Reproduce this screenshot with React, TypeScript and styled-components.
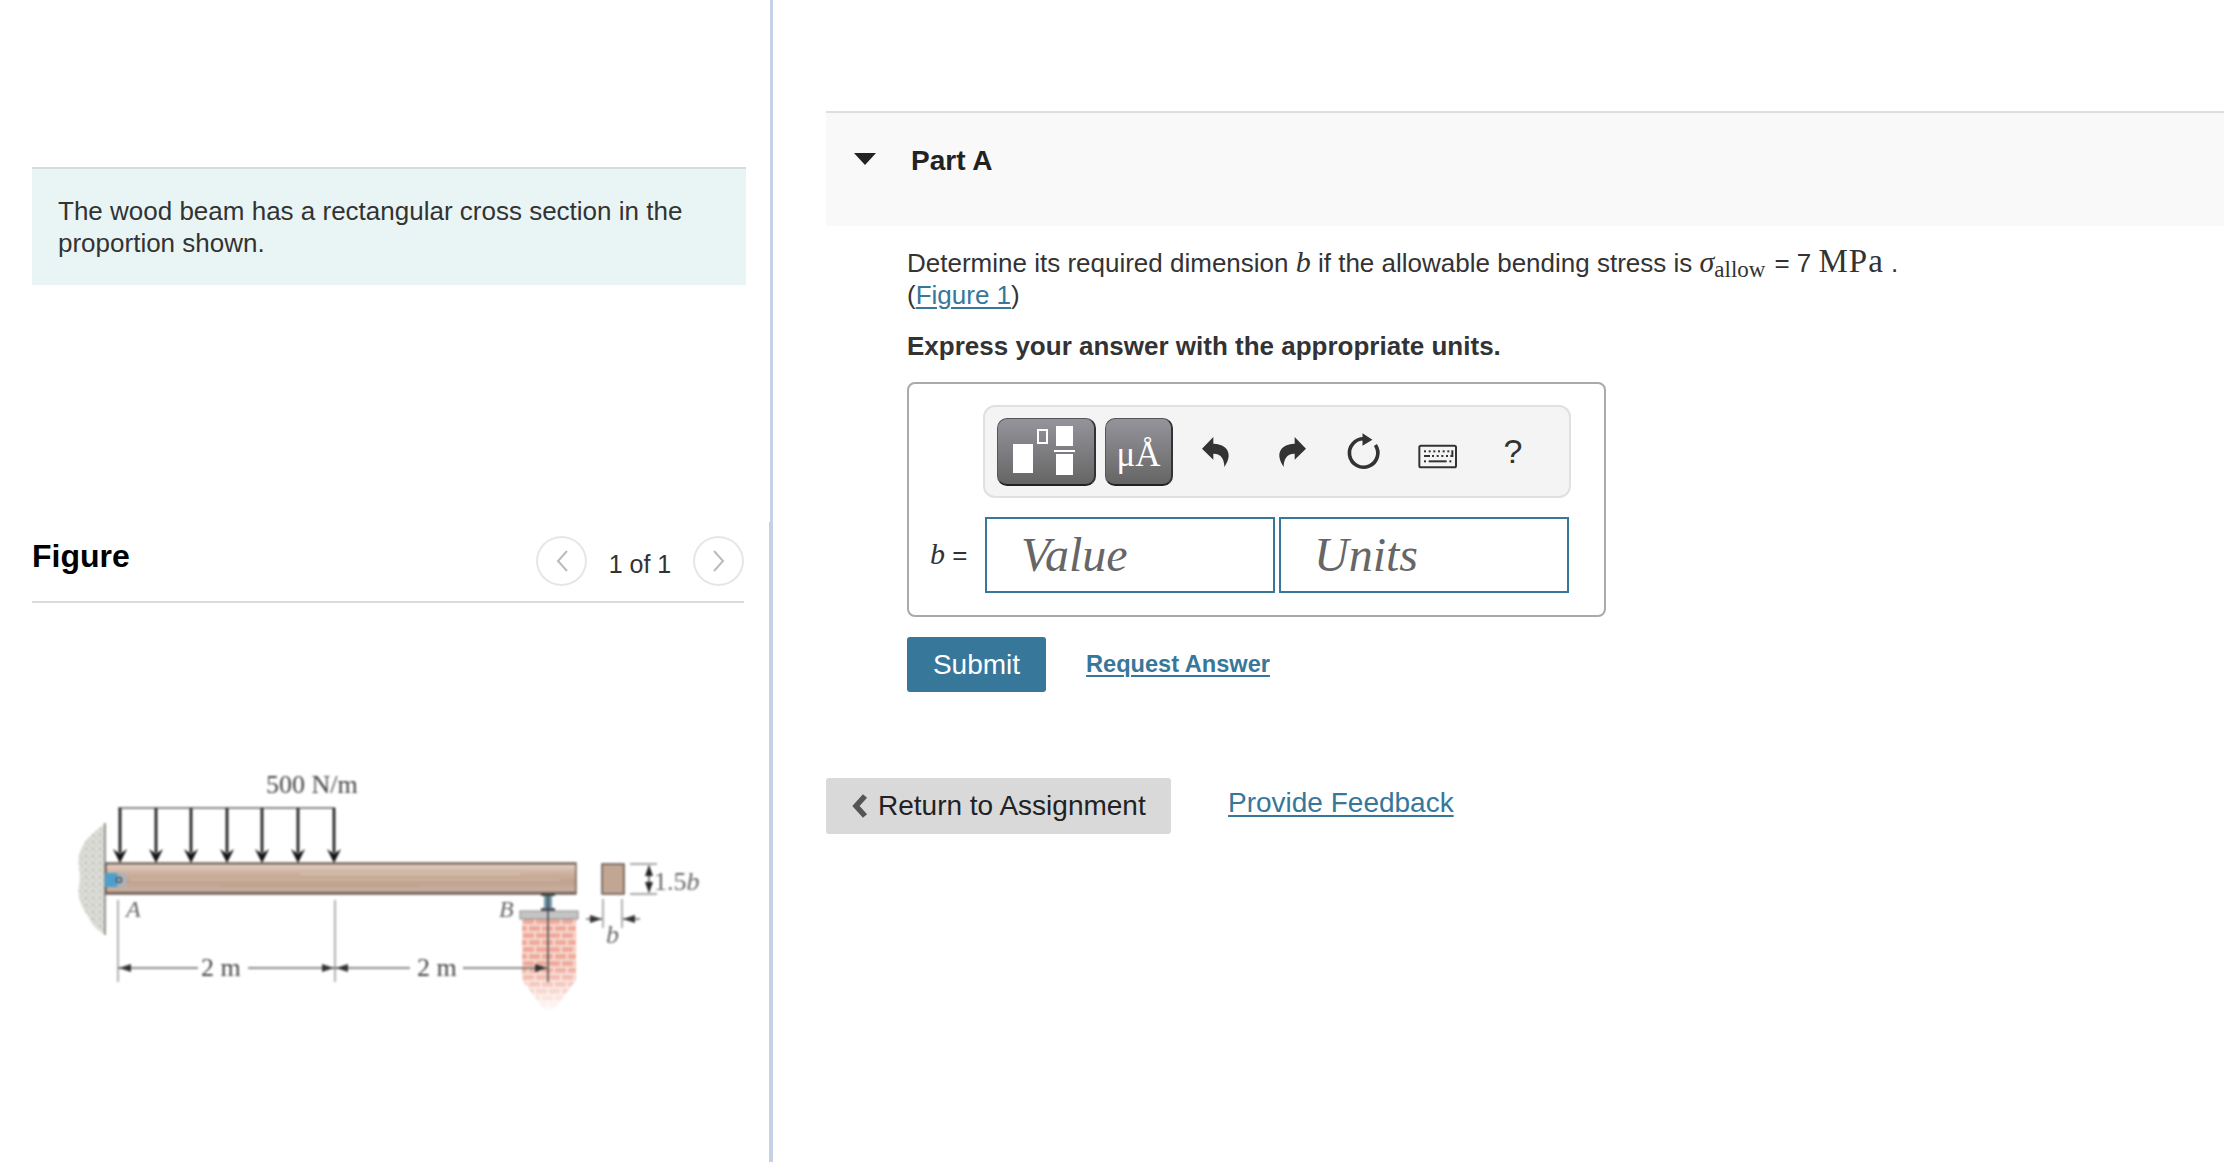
import React from "react";
import styled, { createGlobalStyle } from "styled-components";

const Global = createGlobalStyle`
  html, body { margin: 0; padding: 0; background: #fff; }
  body { font-family: "Liberation Sans", Arial, sans-serif; color: #333; }
`;

const Page = styled.div`
  display: flex;
  width: 2224px;
  height: 1162px;
  overflow: hidden;
`;

const LeftPane = styled.aside`
  position: relative;
  box-sizing: border-box;
  width: 773px;
  height: 100%;
  flex: none;
  padding: 167px 0 0 32px;
  border-right: 3px solid #c6d2e4;
  &::after {
    content: "";
    position: absolute;
    top: 522px;
    bottom: 0;
    right: 0;
    width: 1px;
    background: #c6d2e4;
  }
`;

const Intro = styled.div`
  box-sizing: border-box;
  width: 714px;
  height: 118px;
  padding: 26px 26px 0;
  background: #e9f5f5;
  border-top: 2px solid #d4dcdc;
  font-size: 26px;
  line-height: 32px;
  color: #333;
`;

const FigureHeader = styled.div`
  box-sizing: border-box;
  display: flex;
  justify-content: space-between;
  width: 712px;
  height: 70px;
  margin-top: 248px;
  padding-top: 3px;
  border-bottom: 2px solid #dcdcdc;
`;

const FigureTitle = styled.h2`
  margin: 0;
  font-size: 32px;
  line-height: 40px;
  font-weight: 700;
  color: #000;
`;

const Pager = styled.div`
  display: flex;
  align-items: flex-start;
`;

const PagerCircle = styled.div`
  box-sizing: border-box;
  display: flex;
  align-items: center;
  justify-content: center;
  width: 51px;
  height: 50px;
  border: 2px solid #e6e6e6;
  border-radius: 50%;
`;

const PagerText = styled.span`
  width: 106px;
  text-align: center;
  font-size: 25px;
  line-height: 56px;
  color: #333;
`;

const FigureSvg = styled.svg`
  display: block;
  width: 660px;
  height: 260px;
  margin: 157px 0 0 28px;
  filter: blur(0.8px);
`;

const RightPane = styled.main`
  flex: 1;
  min-width: 0;
  padding: 111px 0 0 53px;
`;

const PartHeader = styled.div`
  box-sizing: border-box;
  display: flex;
  height: 115px;
  padding: 30px 0 0 28px;
  background: #f9f9f9;
  border-top: 2px solid #dedede;
`;

const Caret = styled.span`
  width: 0;
  height: 0;
  margin-top: 10px;
  border-left: 11px solid transparent;
  border-right: 11px solid transparent;
  border-top: 12px solid #222;
`;

const PartTitle = styled.h3`
  margin: 0 0 0 35px;
  font-size: 28px;
  line-height: 36px;
  font-weight: 700;
  color: #222;
`;

const PartBody = styled.div`
  padding: 21px 0 0 81px;
`;

const Para = styled.p`
  margin: 0;
  width: 1040px;
  font-size: 26px;
  line-height: 32px;
  color: #333;
`;

const Prompt = styled.p`
  margin: 19px 0 0;
  font-size: 26px;
  line-height: 33px;
  font-weight: 700;
  color: #333;
`;

const MathVar = styled.span`
  font-family: "Liberation Serif", serif;
  font-style: italic;
  font-size: ${p => p.$size || 30}px;
  line-height: 0;
`;

const MathSub = styled.span`
  font-family: "Liberation Serif", serif;
  font-size: 23px;
  line-height: 0;
  position: relative;
  top: 5px;
  margin-right: 9px;
`;

const MathUnit = styled.span`
  font-family: "Liberation Serif", serif;
  font-size: 33px;
  letter-spacing: 1px;
  line-height: 0;
`;

const Link = styled.a`
  color: #37779a;
  text-decoration: underline;
  text-decoration-thickness: 2px;
  text-underline-offset: 3px;
`;

const AnswerBox = styled.div`
  box-sizing: border-box;
  width: 699px;
  height: 235px;
  margin-top: 19px;
  padding: 21px 0 0;
  border: 2px solid #aaa;
  border-radius: 8px;
`;

const Toolbar = styled.div`
  box-sizing: border-box;
  display: flex;
  align-items: center;
  width: 588px;
  height: 93px;
  margin-left: 74px;
  padding-left: 12px;
  background: #f4f4f4;
  border: 2px solid #e0e0e0;
  border-radius: 12px;
`;

const ToolButton = styled.div`
  box-sizing: border-box;
  flex: none;
  display: flex;
  align-items: center;
  justify-content: center;
  width: ${p => p.$w}px;
  height: 68px;
  margin-right: ${p => p.$mr}px;
  background: linear-gradient(#96949b, #656565);
  border: 1px solid #55555a;
  border-bottom: 2px solid #222;
  border-right: 2px solid #333;
  border-radius: 10px;
`;

const UnitGlyph = styled.span`
  font-family: "Liberation Serif", serif;
  font-size: 35px;
  line-height: 1;
  color: #fff;
  margin-top: 6px;
`;

const ToolSlot = styled.div`
  flex: none;
  display: flex;
  align-items: center;
  justify-content: center;
  width: ${p => p.$w}px;
`;

const Help = styled.span`
  font-size: 34px;
  line-height: 40px;
  color: #333;
  margin: -2px 2px 0 0;
`;

const InputRow = styled.div`
  display: flex;
  align-items: center;
  margin-top: 19px;
`;

const InputLabel = styled.div`
  box-sizing: border-box;
  width: 76px;
  padding-left: 21px;
  font-size: 26px;
  white-space: nowrap;
`;

const Field = styled.div`
  box-sizing: border-box;
  width: 290px;
  height: 76px;
  margin-right: 4px;
  padding-left: ${p => p.$pl}px;
  border: 2px solid #37779a;
  font-family: "Liberation Serif", serif;
  font-style: italic;
  font-size: 48px;
  line-height: 72px;
  color: #666;
`;

const SubmitRow = styled.div`
  display: flex;
  align-items: center;
  margin-top: 20px;
`;

const SubmitButton = styled.button`
  width: 139px;
  height: 55px;
  padding: 0;
  border: 0;
  border-radius: 3px;
  background: #37779a;
  color: #fff;
  font-family: inherit;
  font-size: 28px;
`;

const RequestLink = styled(Link)`
  margin-left: 40px;
  font-size: 23.6px;
  font-weight: 700;
`;

const FooterRow = styled.div`
  display: flex;
  align-items: flex-start;
  margin: 86px 0 0 -81px;
`;

const ReturnButton = styled.button`
  box-sizing: border-box;
  display: flex;
  align-items: center;
  gap: 10px;
  width: 345px;
  height: 56px;
  padding: 0 0 0 26px;
  border: 0;
  border-radius: 3px;
  background: #d9d9d9;
  color: #222;
  font-family: inherit;
  font-size: 28px;
`;

const FeedbackLink = styled(Link)`
  margin: 6px 0 0 57px;
  font-size: 28px;
  line-height: 38px;
`;

const Arrow = ({ x, y1, y2 }: { x: number; y1: number; y2: number }) => (
  <g>
    <line x1={x} y1={y1} x2={x} y2={y2 - 10} stroke="#222" strokeWidth="2.8" />
    <path d={`M${x - 7} ${y2 - 14} L${x} ${y2 - 9} L${x + 7} ${y2 - 14} L${x} ${y2} Z`} fill="#111" />
  </g>
);

const HArrow = ({ tip, dir, y }: { tip: number; dir: number; y: number }) => (
  <path d={`M${tip} ${y} L${tip + dir * 12} ${y - 4} L${tip + dir * 12} ${y + 4} Z`} fill="#333" />
);

const Beam = () => (
  <FigureSvg viewBox="60 760 660 260" xmlns="http://www.w3.org/2000/svg">
    <defs>
      <linearGradient id="wood" x1="0" y1="0" x2="0" y2="1">
        <stop offset="0" stopColor="#5f4a40" />
        <stop offset="0.08" stopColor="#e0cdbf" />
        <stop offset="0.3" stopColor="#cfb3a1" />
        <stop offset="0.6" stopColor="#bfa28f" />
        <stop offset="0.9" stopColor="#cbb09f" />
        <stop offset="1" stopColor="#4e3e36" />
      </linearGradient>
      <pattern id="brick" width="26" height="14" patternUnits="userSpaceOnUse" x="522" y="918">
        <rect width="26" height="14" fill="#f7dcd3" />
        <rect x="1" y="1" width="11" height="5" fill="#eeaa9b" />
        <rect x="14" y="1" width="11" height="5" fill="#eeaa9b" />
        <rect x="-6" y="8" width="11" height="5" fill="#eeaa9b" />
        <rect x="7" y="8" width="11" height="5" fill="#eeaa9b" />
        <rect x="20" y="8" width="11" height="5" fill="#eeaa9b" />
      </pattern>
      <linearGradient id="fade" x1="0" y1="0" x2="0" y2="1">
        <stop offset="0" stopColor="#fff" />
        <stop offset="0.5" stopColor="#fff" />
        <stop offset="0.72" stopColor="#999" />
        <stop offset="1" stopColor="#000" />
      </linearGradient>
      <mask id="brickMask">
        <path d="M522 918 H576 V980 L552 1012 H546 L522 980 Z" fill="url(#fade)" />
      </mask>
      <pattern id="speck" width="7" height="7" patternUnits="userSpaceOnUse">
        <rect width="7" height="7" fill="#dcdcd6" />
        <circle cx="2" cy="2" r="1.2" fill="#bdbdb6" />
        <circle cx="5" cy="5" r="1" fill="#c8c8c1" />
      </pattern>
    </defs>

    <path
      d="M105 823 C98 830 84 838 80 852 C76 864 82 872 79 886 C77 898 82 908 88 916 C92 926 98 930 105 935 Z"
      fill="url(#speck)"
    />
    <line x1="105" y1="823" x2="105" y2="935" stroke="#777" strokeWidth="1.5" />

    <line x1="118" y1="808" x2="335" y2="808" stroke="#888" strokeWidth="2" />
    {[120, 156, 191, 227, 262, 298, 334].map(x => (
      <Arrow key={x} x={x} y1={808} y2={863} />
    ))}

    <rect x="106" y="863" width="470" height="31" fill="url(#wood)" stroke="#5a4a42" strokeWidth="1.2" />
    <line x1="130" y1="880" x2="560" y2="880" stroke="#d8c1b1" strokeWidth="1.5" opacity="0.7" />
    <line x1="300" y1="874" x2="520" y2="874" stroke="#e3d1c4" strokeWidth="1" opacity="0.7" />
    <line x1="220" y1="886" x2="420" y2="886" stroke="#b09381" strokeWidth="1.2" opacity="0.6" />

    <rect x="105" y="873" width="14" height="14" fill="#4da0cc" />
    <rect x="117" y="873" width="9" height="14" rx="2" fill="#a9b4bb" />
    <circle cx="119" cy="880" r="2.6" fill="none" stroke="#345" strokeWidth="1.2" />

    <line x1="118" y1="900" x2="118" y2="982" stroke="#888" strokeWidth="1.3" />
    <line x1="335" y1="900" x2="335" y2="982" stroke="#888" strokeWidth="1.3" />
    <text x="126" y="917" fontFamily="Liberation Serif" fontStyle="italic" fontSize="24" fill="#666">A</text>
    <text x="499" y="917" fontFamily="Liberation Serif" fontStyle="italic" fontSize="24" fill="#666">B</text>

    <rect x="522" y="918" width="54" height="96" fill="url(#brick)" mask="url(#brickMask)" />
    <rect x="520" y="911" width="58" height="8" fill="#c4c4c4" stroke="#8b8b8b" strokeWidth="1" />
    <rect x="544" y="895" width="8" height="16" fill="#6f97a8" />
    <rect x="541" y="893" width="14" height="3" fill="#444" />
    <rect x="541" y="908" width="14" height="3" fill="#556" />
    <line x1="548" y1="895" x2="548" y2="982" stroke="#444" strokeWidth="1.5" />

    <line x1="118" y1="968" x2="198" y2="968" stroke="#666" strokeWidth="1.3" />
    <line x1="248" y1="968" x2="335" y2="968" stroke="#666" strokeWidth="1.3" />
    <line x1="335" y1="968" x2="410" y2="968" stroke="#666" strokeWidth="1.3" />
    <line x1="463" y1="968" x2="548" y2="968" stroke="#666" strokeWidth="1.3" />
    <HArrow tip={119} dir={1} y={968} />
    <HArrow tip={334} dir={-1} y={968} />
    <HArrow tip={336} dir={1} y={968} />
    <HArrow tip={547} dir={-1} y={968} />
    <text x="201" y="976" fontFamily="Liberation Serif" fontSize="26" fill="#444">2 m</text>
    <text x="417" y="976" fontFamily="Liberation Serif" fontSize="26" fill="#444">2 m</text>
    <text x="266" y="793" fontFamily="Liberation Serif" fontSize="26" fill="#444">500 N/m</text>

    <rect x="602" y="864" width="22" height="30" fill="#c2a694" stroke="#5a4a42" strokeWidth="1.4" />
    <line x1="630" y1="864" x2="657" y2="864" stroke="#777" strokeWidth="1.3" />
    <line x1="630" y1="894" x2="657" y2="894" stroke="#777" strokeWidth="1.3" />
    <line x1="649" y1="866" x2="649" y2="892" stroke="#333" strokeWidth="1.3" />
    <path d="M649 865 L645 876 H653 Z M649 893 L645 882 H653 Z" fill="#222" />
    <text x="654" y="890" fontFamily="Liberation Serif" fontSize="26" fill="#666">
      1.5<tspan fontStyle="italic">b</tspan>
    </text>
    <line x1="603" y1="899" x2="603" y2="928" stroke="#888" strokeWidth="1.3" />
    <line x1="622" y1="899" x2="622" y2="928" stroke="#888" strokeWidth="1.3" />
    <line x1="586" y1="919" x2="602" y2="919" stroke="#444" strokeWidth="1.2" />
    <line x1="623" y1="919" x2="640" y2="919" stroke="#444" strokeWidth="1.2" />
    <HArrow tip={602} dir={-1} y={919} />
    <HArrow tip={623} dir={1} y={919} />
    <text x="606" y="943" fontFamily="Liberation Serif" fontStyle="italic" fontSize="26" fill="#666">b</text>
  </FigureSvg>
);

const TemplatesIcon = () => (
  <svg width="66" height="54" viewBox="0 0 66 54">
    <rect x="0" y="20" width="20" height="29" fill="#fff" />
    <rect x="25" y="6" width="9" height="13" fill="none" stroke="#fff" strokeWidth="2" />
    <rect x="43" y="2" width="17" height="20" fill="#fff" />
    <rect x="41" y="26" width="21" height="2" fill="#fff" />
    <rect x="43" y="30" width="17" height="21" fill="#fff" />
  </svg>
);

const UndoIcon = ({ flip }: { flip?: boolean }) => (
  <svg width="30" height="32" viewBox="60 74 90 96">
    <path
      transform={flip ? "translate(210 0) scale(-1 1)" : undefined}
      d="M63 112 L97 77 L97 97 C125 97 145 112 143 135 C142 148 136 158 130 167 C130 145 122 127 97 127 L97 145 Z"
      fill="#333"
    />
  </svg>
);

const RefreshIcon = () => (
  <svg width="38" height="40" viewBox="495 65 115 120">
    <path d="M587 104 A43 43 0 1 1 552 85" fill="none" stroke="#333" strokeWidth="11" />
    <path d="M548 68 L578 88 L548 106 Z" fill="#333" />
  </svg>
);

const KeyboardIcon = () => (
  <svg width="40" height="25" viewBox="715 100 120 75" style={{ marginTop: 10 }}>
    <rect x="719" y="105" width="110" height="65" rx="5" fill="#f4f4f4" stroke="#333" strokeWidth="6" />
    {[733, 747, 761, 775, 789, 803].map(x => (
      <rect key={x} x={x} y="119" width="6" height="6" fill="#333" />
    ))}
    <rect x="733" y="133" width="18" height="6" fill="#333" />
    {[757, 771, 785, 799].map(x => (
      <rect key={x} x={x} y="133" width="6" height="6" fill="#333" />
    ))}
    <path d="M815 119 h6 v20 h-9 v-6 h3 Z" fill="#333" />
    <rect x="733" y="149" width="6" height="6" fill="#333" />
    <rect x="747" y="149" width="54" height="6" fill="#333" />
    <rect x="809" y="149" width="6" height="6" fill="#333" />
  </svg>
);

export default function App() {
  return (
    <Page>
      <Global />
      <LeftPane>
        <Intro>The wood beam has a rectangular cross section in the proportion shown.</Intro>
        <FigureHeader>
          <FigureTitle>Figure</FigureTitle>
          <Pager>
            <PagerCircle>
              <svg width="14" height="24" viewBox="0 0 14 24">
                <path d="M12 2 L3 12 L12 22" fill="none" stroke="#bbb" strokeWidth="2" />
              </svg>
            </PagerCircle>
            <PagerText>1 of 1</PagerText>
            <PagerCircle>
              <svg width="14" height="24" viewBox="0 0 14 24">
                <path d="M2 2 L11 12 L2 22" fill="none" stroke="#bbb" strokeWidth="2" />
              </svg>
            </PagerCircle>
          </Pager>
        </FigureHeader>
        <Beam />
      </LeftPane>
      <RightPane>
        <PartHeader>
          <Caret />
          <PartTitle>Part A</PartTitle>
        </PartHeader>
        <PartBody>
          <Para>
            Determine its required dimension <MathVar>b</MathVar> if the allowable bending stress is{" "}
            <MathVar>σ</MathVar>
            <MathSub>allow</MathSub>= 7 <MathUnit>MPa</MathUnit> .
            <br />(<Link href="#">Figure 1</Link>)
          </Para>
          <Prompt>Express your answer with the appropriate units.</Prompt>
          <AnswerBox>
            <Toolbar>
              <ToolButton $w={99} $mr={9}>
                <TemplatesIcon />
              </ToolButton>
              <ToolButton $w={68} $mr={5}>
                <UnitGlyph>μÅ</UnitGlyph>
              </ToolButton>
              <ToolSlot $w={76}>
                <UndoIcon />
              </ToolSlot>
              <ToolSlot $w={76}>
                <UndoIcon flip />
              </ToolSlot>
              <ToolSlot $w={68}>
                <RefreshIcon />
              </ToolSlot>
              <ToolSlot $w={80}>
                <KeyboardIcon />
              </ToolSlot>
              <ToolSlot $w={72}>
                <Help>?</Help>
              </ToolSlot>
            </Toolbar>
            <InputRow>
              <InputLabel>
                <MathVar>b</MathVar> =
              </InputLabel>
              <Field $pl={34}>Value</Field>
              <Field $pl={33}>Units</Field>
            </InputRow>
          </AnswerBox>
          <SubmitRow>
            <SubmitButton>Submit</SubmitButton>
            <RequestLink href="#">Request Answer</RequestLink>
          </SubmitRow>
          <FooterRow>
            <ReturnButton>
              <svg width="16" height="24" viewBox="0 0 16 24">
                <path d="M13 2 L4 12 L13 22" fill="none" stroke="#555" strokeWidth="5.5" />
              </svg>
              Return to Assignment
            </ReturnButton>
            <FeedbackLink href="#">Provide Feedback</FeedbackLink>
          </FooterRow>
        </PartBody>
      </RightPane>
    </Page>
  );
}
